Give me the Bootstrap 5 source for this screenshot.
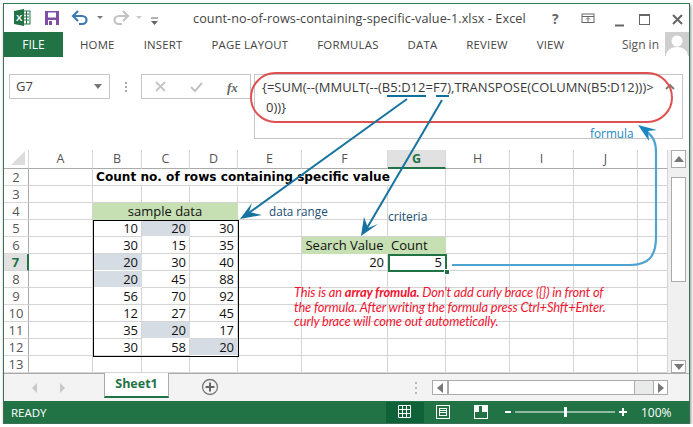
<!DOCTYPE html>
<html lang="en"><head><meta charset="utf-8"><title>Excel</title>
<link href="https://cdn.jsdelivr.net/npm/bootstrap@5.3.0/dist/css/bootstrap.min.css" rel="stylesheet">
<style>
html,body{margin:0;background:#fff;overflow:hidden}
body{font-family:"Open Sans","Liberation Sans",sans-serif;color:#222}
.xlwin{width:687px;height:421px;margin:3px 0 0 3px;border:1px solid #3f6f58;border-top-color:#2f7f55;box-shadow:1px 2px 3px rgba(0,0,0,.45);background:#fff;position:relative;overflow:visible}
.xltitle{height:28px;font-size:12.6px;color:#444}
.xltitle .nm{position:absolute;left:189px;top:6px;white-space:nowrap;letter-spacing:.1px}
.xlicon{position:absolute}
.xltabs{height:25px;color:#444}
.xlfile{width:59px;height:25px;background:#217346;color:#fff;border:0;border-radius:0;font-size:12px;padding:0;line-height:25px}
.xltabs .nav-link{color:#444;padding:0;line-height:25px;margin-left:29px;font-size:11.4px;letter-spacing:.2px;white-space:nowrap}
.xltabs .nav-link:first-child{margin-left:17px}
.xlsign{position:absolute;left:618px;top:28px;font-size:12px;line-height:25px;color:#555}
.xlavatar{position:absolute;left:661px;top:28px}
.xlfbar{height:65px;margin-top:17px;padding-left:5px}
.xlname{width:101px;height:25px;border:1px solid #c6c6c6;font-size:13px;line-height:23px;padding-left:6px;color:#444;position:relative}
.xlname:after{content:"";position:absolute;right:7px;top:9px;border:4px solid transparent;border-top:5px solid #777}
.xldots{width:31px}
.xlfx{width:110px;height:25px;border:1px solid #c6c6c6;color:#bbb}
.xlformula{width:429px;height:65px;margin-left:3px;border:1px solid #c6c6c6;font-size:13px;letter-spacing:.02px;line-height:20px;padding:2px 0 0 7px;color:#3a3a3a;white-space:nowrap}
.xlformula .in2{padding-left:4px}
.xlsheetrow{margin-top:11px;height:223px}
.xlgrid{width:664px;border-collapse:separate;border-spacing:0;table-layout:fixed;font-size:13px;color:#111}
.xlgrid td,.xlgrid th{height:17px;padding:0 3px 0 0;border-right:1px solid #d4d4d4;border-bottom:1px solid #d4d4d4;line-height:16px;text-align:right;overflow:visible;white-space:nowrap;font-weight:400}
.xlgrid thead th{height:19px;text-align:center;padding:0;font-size:12.5px;color:#555;border-bottom:1px solid #ababab;border-right-color:#d8d8d8}
.xlgrid tbody th{text-align:center;padding:0;color:#555;font-size:13px;border-right:1px solid #ababab;border-bottom-color:#d8d8d8}
.xlgrid .corner{position:relative}
.xlgrid .corner:after{content:"";position:absolute;right:3px;bottom:3px;border:7px solid transparent;border-right-color:#dcdcdc;border-bottom-color:#dcdcdc}
.xlgrid thead .act{background:#e1e1e1;color:#217346;font-weight:700;border-bottom:2px solid #217346}
.xlgrid tbody .actr{background:#e1e1e1;color:#217346;font-weight:700;border-right:2px solid #217346}
.xlgrid .xlhead{background:#c6e0b4;text-align:center;padding:0;border-right-color:#c6e0b4;border-bottom-color:#c6e0b4}
.xlgrid .xlhl{background:#d6dce4;border-right-color:#d6dce4;border-bottom-color:#fff}
.xlgrid .xltt{text-align:left;padding-left:3px;font:700 12.1px "DejaVu Sans",sans-serif;color:#000;border-right:0}
.xlgrid .xlcnt{text-align:left;padding-left:3px}
.xlrange{position:absolute;left:89px;top:216px;width:146px;height:137px;border:1px solid #000;pointer-events:none}
.xlsel{position:absolute;left:384px;top:250px;width:59px;height:18px;border:2px solid #217346}
.xlsel:after{content:"";position:absolute;right:-5px;bottom:-5px;width:6px;height:6px;background:#217346;border:1px solid #fff}
.xlvs{width:21px;background:#f0f0f0;position:relative}
.xlvb{position:absolute;left:3px;width:15px;background:#fff;border:1px solid #ababab}
.xlsbar{height:28px;background:#f3f3f3;border-top:1px solid #ababab;position:relative}
.xltab{position:absolute;left:100px;top:-1px;width:65px;height:25px;background:#fff;border:1px solid #ababab;border-top:0;border-bottom:2px solid #217346;color:#217346;font-weight:700;font-size:12.5px;text-align:center;line-height:22px}
.xlh{position:absolute;top:6px;height:15px;background:#fff;border:1px solid #ababab}
.xlstatus{height:22px;background:#217346;color:#fff;font-size:11.5px;position:relative}
.xlstatus .rd{position:absolute;left:7px;top:3px}
.xlstatus .pc{position:absolute;left:637px;top:3px;font-size:12px}
.xlstatus .cur{position:absolute;left:382px;top:1px;width:38px;height:21px;background:#0f6237}
.xlnote{position:absolute;white-space:nowrap;font-size:12px}
.xlred{color:#f0142f;font:italic 12.9px/14.5px Lato,"Open Sans",sans-serif;letter-spacing:-.15px}
.xlover{position:absolute;left:-4px;top:-4px;pointer-events:none}
</style></head><body>
<div class="xlwin d-flex flex-column">
 <div class="xltitle position-relative">
  <svg class="xlicon" style="left:9px;top:5px" width="18" height="17" viewBox="0 0 18 17"><rect x="9" y="2" width="8" height="13" fill="#fff" stroke="#217346"/><path d="M11 5h5M11 8h5M11 11h5M13.500 2v13" stroke="#217346"/><path d="M1 2l10-2v17L1 15z" fill="#217346"/><text x="3" y="12" font-size="9.500" font-weight="700" fill="#fff" font-family="Liberation Sans">X</text></svg>
  <svg class="xlicon" style="left:40px;top:6px" width="16" height="16" viewBox="0 0 16 16"><path d="M1 1h14v14H1z" fill="#7e4fa5"/><rect x="4" y="2.500" width="8" height="5" fill="#fff"/><rect x="4" y="10" width="8" height="5" fill="#fff"/><rect x="5" y="11" width="3" height="4" fill="#7e4fa5"/></svg>
  <svg class="xlicon" style="left:67px;top:6px" width="32" height="16" viewBox="0 0 32 16"><path d="M3 6h8c6 0 6 8 0 8h-3" fill="none" stroke="#3c78b5" stroke-width="2.200"/><path d="M7 1L2 6l5 5" fill="none" stroke="#3c78b5" stroke-width="2.200"/><path d="M26 6l6 0-3 3z" fill="#777"/></svg>
  <svg class="xlicon" style="left:108px;top:6px" width="32" height="16" viewBox="0 0 32 16"><path d="M15 6H7c-6 0-6 8 0 8h3" fill="none" stroke="#c4c4c4" stroke-width="2.200"/><path d="M11 1l5 5-5 5" fill="none" stroke="#c4c4c4" stroke-width="2.200"/><path d="M24 6l6 0-3 3z" fill="#c8c8c8"/></svg>
  <svg class="xlicon" style="left:146px;top:13px" width="9" height="9" viewBox="0 0 9 9"><path d="M1 1h7" stroke="#666"/><path d="M1 4h7L4.500 8z" fill="#666"/></svg>
  <span class="nm">count-no-of-rows-containing-specific-value-1.xlsx - Excel</span>
  <svg class="xlicon" style="left:545px;top:6px" width="140" height="18" viewBox="0 0 140 18" fill="none"><text x="3" y="14" font-size="14" font-weight="700" fill="#666" font-family="Open Sans">?</text><rect x="33" y="4" width="12" height="8.500" stroke="#666"/><path d="M33 6.500h12" stroke="#666"/><path d="M39 12V8M37 9.500l2-2 2 2" stroke="#666"/><path d="M66 15.500h9" stroke="#666" stroke-width="2"/><rect x="90.500" y="4.500" width="10" height="10" stroke="#666"/><path d="M90 5h11" stroke="#666" stroke-width="2"/><path d="M124 5l9 9M133 5l-9 9" stroke="#666" stroke-width="2"/></svg>
 </div>
 <div class="xltabs d-flex position-relative">
  <button class="btn xlfile">FILE</button>
  <nav class="nav flex-nowrap"><a class="nav-link">HOME</a><a class="nav-link">INSERT</a><a class="nav-link">PAGE LAYOUT</a><a class="nav-link">FORMULAS</a><a class="nav-link">DATA</a><a class="nav-link">REVIEW</a><a class="nav-link">VIEW</a></nav>
 </div>
 <span class="xlsign">Sign in</span>
 <svg class="xlavatar" width="24" height="24" viewBox="0 0 24 24"><rect width="24" height="24" fill="#cfcfcf"/><circle cx="12" cy="9" r="5.500" fill="#fff"/><path d="M1 24c0-6 6-9 11-9s11 3 11 9z" fill="#fff"/></svg>
 <div class="xlfbar d-flex align-items-start">
  <div class="xlname">G7</div>
  <div class="xldots d-flex justify-content-center"><svg width="4" height="25" viewBox="0 0 4 25" fill="#aaa"><rect x="1" y="8" width="2" height="2"/><rect x="1" y="12" width="2" height="2"/><rect x="1" y="16" width="2" height="2"/></svg></div>
  <div class="xlfx position-relative"><svg class="xlicon" style="left:0;top:0" width="108" height="23" viewBox="0 0 108 23" fill="none"><path d="M14 7l9 9M23 7l-9 9" stroke="#c4c4c4" stroke-width="1.800"/><path d="M49 12l4 4 7-8" stroke="#c4c4c4" stroke-width="2"/><text x="85" y="17" font-size="13" font-style="italic" font-weight="700" fill="#666" font-family="Liberation Serif">fx</text></svg></div>
  <div class="xlformula position-relative">{=SUM(--(MMULT(--(B5:D12=F7),TRANSPOSE(COLUMN(B5:D12)))&gt;<br><span class="in2">0))}</span>
   <svg class="xlicon" style="right:7px;top:8px" width="10" height="8" viewBox="0 0 10 8" fill="none"><path d="M1 6l4-4 4 4" stroke="#777" stroke-width="1.800"/></svg>
  </div>
 </div>
 <div class="xlsheetrow d-flex">
  <table class="xlgrid">
   <colgroup><col style="width:25px"><col style="width:64px"><col style="width:49px"><col style="width:48px"><col style="width:48px"><col style="width:64px"><col style="width:86px"><col style="width:58px"><col style="width:64px"><col style="width:64px"><col style="width:64px"><col></colgroup>
   <thead><tr><th class="corner"></th><th>A</th><th>B</th><th>C</th><th>D</th><th>E</th><th>F</th><th class="act">G</th><th>H</th><th>I</th><th>J</th><th></th></tr></thead>
   <tbody>
   <tr><th>2</th><td></td><td class="xltt" colspan="5">Count no. of rows containing specific value</td><td></td><td></td><td></td><td></td><td></td></tr>
   <tr><th>3</th><td></td><td></td><td></td><td></td><td></td><td></td><td></td><td></td><td></td><td></td><td></td></tr>
   <tr><th>4</th><td></td><td class="xlhead" colspan="3">sample data</td><td></td><td></td><td></td><td></td><td></td><td></td><td></td></tr>
   <tr><th>5</th><td></td><td>10</td><td class="xlhl">20</td><td>30</td><td></td><td></td><td></td><td></td><td></td><td></td><td></td></tr>
   <tr><th>6</th><td></td><td>30</td><td>15</td><td>35</td><td></td><td class="xlhead">Search Value</td><td class="xlhead xlcnt">Count</td><td></td><td></td><td></td><td></td></tr>
   <tr><th class="actr">7</th><td></td><td class="xlhl">20</td><td>30</td><td>40</td><td></td><td>20</td><td>5</td><td></td><td></td><td></td><td></td></tr>
   <tr><th>8</th><td></td><td class="xlhl">20</td><td>45</td><td>88</td><td></td><td></td><td></td><td></td><td></td><td></td><td></td></tr>
   <tr><th>9</th><td></td><td>56</td><td>70</td><td>92</td><td></td><td></td><td></td><td></td><td></td><td></td><td></td></tr>
   <tr><th>10</th><td></td><td>12</td><td>27</td><td>45</td><td></td><td></td><td></td><td></td><td></td><td></td><td></td></tr>
   <tr><th>11</th><td></td><td>35</td><td class="xlhl">20</td><td>17</td><td></td><td></td><td></td><td></td><td></td><td></td><td></td></tr>
   <tr><th>12</th><td></td><td>30</td><td>58</td><td class="xlhl">20</td><td></td><td></td><td></td><td></td><td></td><td></td><td></td></tr>
   <tr><th>13</th><td></td><td></td><td></td><td></td><td></td><td></td><td></td><td></td><td></td><td></td><td></td></tr>
   </tbody>
  </table>
  <div class="xlvs">
   <div class="xlvb" style="top:0;height:18px"><svg class="xlicon" style="left:2px;top:5px" width="10" height="6"><path d="M0 6h10L5 0z" fill="#777"/></svg></div>
   <div class="xlvb" style="top:27px;height:105px"></div>
   <div class="xlvb" style="top:210px;height:13px"><svg class="xlicon" style="left:2px;top:3px" width="10" height="6"><path d="M0 0h10L5 6z" fill="#777"/></svg></div>
  </div>
 </div>
 <div class="xlsbar">
  <svg class="xlicon" style="left:26px;top:8px" width="40" height="12"><path d="M7 1v10L2 6z" fill="#c8c8c8"/><path d="M30 1v10l5-5z" fill="#c8c8c8"/></svg>
  <div class="xltab">Sheet1</div>
  <svg class="xlicon" style="left:197px;top:4px" width="18" height="18" viewBox="0 0 18 18" fill="none"><circle cx="9" cy="9" r="7.500" stroke="#777" stroke-width="1.300"/><path d="M9 4.500v9M4.500 9h9" stroke="#666" stroke-width="2"/></svg>
  <svg class="xlicon" style="left:411px;top:8px" width="3" height="13" fill="#bbb"><rect y="0" width="2" height="2"/><rect y="5" width="2" height="2"/><rect y="10" width="2" height="2"/></svg>
  <div class="xlh" style="left:428px;width:236px;background:#e9ebeb"></div>
  <div class="xlh" style="left:428px;width:16px"><svg class="xlicon" style="left:4px;top:2px" width="6" height="10"><path d="M6 0v10L0 5z" fill="#777"/></svg></div>
  <div class="xlh" style="left:443px;width:188px;border-left-width:2px"></div>
  <div class="xlh" style="left:649px;width:15px"><svg class="xlicon" style="left:4px;top:2px" width="6" height="10"><path d="M0 0v10L6 5z" fill="#777"/></svg></div>
 </div>
 <div class="xlstatus">
  <span class="rd">READY</span>
  <div class="cur"></div>
  <svg class="xlicon" style="left:380px;top:0" width="260" height="22" viewBox="0 0 260 22" fill="none" stroke="#fff"><path d="M14.500 4.500h12v12h-12zM14.500 8.500h12M14.500 12.500h12M18.500 4.500v12M22.500 4.500v12"/><rect x="52.500" y="4.500" width="13" height="13"/><rect x="55.500" y="7.500" width="7" height="7"/><path d="M56 9.500h6M56 11.500h6"/><rect x="90.500" y="4.500" width="13" height="13"/><path d="M90 4h5v7h-5zM98 4h6v7h-6z" fill="#fff" stroke="none"/><path d="M131 11h100"/><path d="M121 11h6M235 11h8M239 7v8" stroke-width="2"/><rect x="180" y="6" width="3" height="10" fill="#fff" stroke="none"/></svg>
  <span class="pc">100%</span>
 </div>

 <div class="xlrange"></div>
 <div class="xlsel"></div>
 <span class="xlnote" style="left:586px;top:121px;color:#1d87c6;font-size:11.8px">formula</span>
 <span class="xlnote" style="left:265px;top:199px;color:#1b4f72;font-size:11.7px">data range</span>
 <span class="xlnote" style="left:384px;top:204px;color:#1b4f72;font-size:12px">criteria</span>
 <div class="xlnote xlred" style="left:290px;top:281px">This is an <b>array fromula.</b> Don't add curly brace ({}) in front of<br>the formula. After writing the formula press Ctrl+Shft+Enter.<br>curly brace will come out autometically.</div>
 <svg class="xlover" width="693" height="427" viewBox="0 0 693 427" fill="none">
  <rect x="251" y="73" width="421" height="49" rx="24.500" stroke="#df5050" stroke-width="2"/>
  <path d="M387 96h39M436 96h13" stroke="#0f6f9f" stroke-width="2"/>
  <path d="M407 99L246 215" stroke="#1673a0" stroke-width="2"/>
  <path d="M240 219l12-16-3 9 13 3z" fill="#1673a0"/>
  <path d="M442 100L367 228" stroke="#1673a0" stroke-width="2"/>
  <path d="M361 236l3-19 4 11 10-4z" fill="#1673a0"/>
  <path d="M452 265h178c18 0 26-8 26-28v-84c0-10-2-16-10-22" stroke="#4fa3d1" stroke-width="2.200"/>
  <path d="M638 125l19 5-9 1 1 10z" fill="#1b86c0"/>
 </svg>
</div>
<script src="https://cdn.jsdelivr.net/npm/bootstrap@5.3.0/dist/js/bootstrap.bundle.min.js"></script>
</body></html>
